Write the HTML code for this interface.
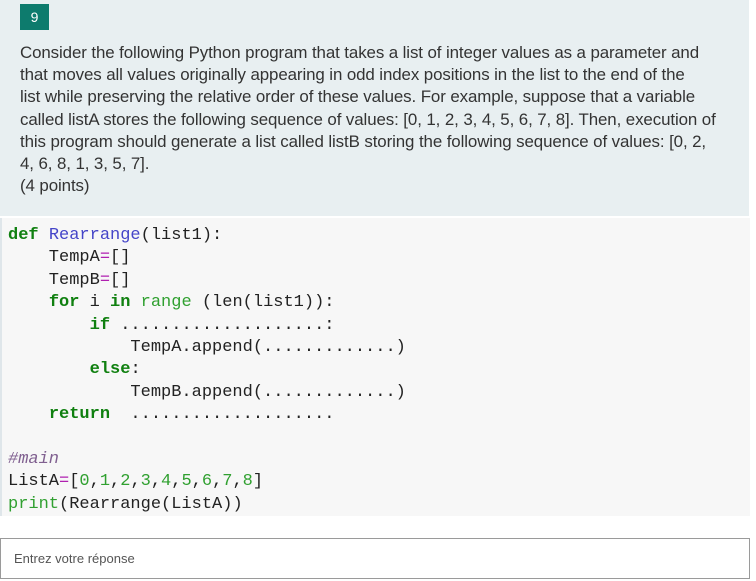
<!DOCTYPE html>
<html><head><style>
body{margin:0;width:756px;height:581px;background:#fff;position:relative;overflow:hidden;font-family:"Liberation Sans",sans-serif}
.top{position:absolute;left:0;top:0;width:749px;height:216px;background:#e8eff1}
.badge{position:absolute;left:20px;top:4px;width:29px;height:26px;background:#0d7b6d;color:#fff;font-size:14px;text-align:center;line-height:26px}
.q{position:absolute;left:20px;top:42px;font-size:16.9px;line-height:22.2px;color:#333;white-space:nowrap;letter-spacing:-0.1px}
.code{position:absolute;left:0;top:218px;width:748px;height:298px;background:#f7f7f7;border-left:2px solid #dfe6ea}
pre{margin:0;position:absolute;left:6px;top:7px;font-family:"Liberation Mono",monospace;font-size:17px;line-height:22.4px;color:#222}
.k{color:#108010;font-weight:bold}.f{color:#4545c8}.o{color:#b020b0}.n{color:#30a030}.c{color:#806090;font-style:italic}.b{color:#30a030}
.inp{position:absolute;left:0;top:538px;width:748px;height:39px;border:1px solid #9a9a9a;font-size:13px;color:#555;line-height:39px;text-indent:13px}
</style></head><body>
<div class="top"><div class="badge">9</div>
<div class="q">Consider the following Python program that takes a list of integer values as a parameter and<br>that moves all values originally appearing in odd index positions in the list to the end of the<br>list while preserving the relative order of these values. For example, suppose that a variable<br>called listA stores the following sequence of values: [0, 1, 2, 3, 4, 5, 6, 7, 8]. Then, execution of<br>this program should generate a list called listB storing the following sequence of values: [0, 2,<br>4, 6, 8, 1, 3, 5, 7].<br>(4 points)</div></div>
<div class="code"><pre><span class="k">def</span> <span class="f">Rearrange</span>(list1):
    TempA<span class="o">=</span>[]
    TempB<span class="o">=</span>[]
    <span class="k">for</span> i <span class="k">in</span> <span class="b">range</span> (len(list1)):
        <span class="k">if</span> ....................:
            TempA.append(.............)
        <span class="k">else</span>:
            TempB.append(.............)
    <span class="k">return</span>  ....................

<span class="c">#main</span>
ListA<span class="o">=</span>[<span class="n">0</span>,<span class="n">1</span>,<span class="n">2</span>,<span class="n">3</span>,<span class="n">4</span>,<span class="n">5</span>,<span class="n">6</span>,<span class="n">7</span>,<span class="n">8</span>]
<span class="b">print</span>(Rearrange(ListA))</pre></div>
<div class="inp">Entrez votre réponse</div>
</body></html>
